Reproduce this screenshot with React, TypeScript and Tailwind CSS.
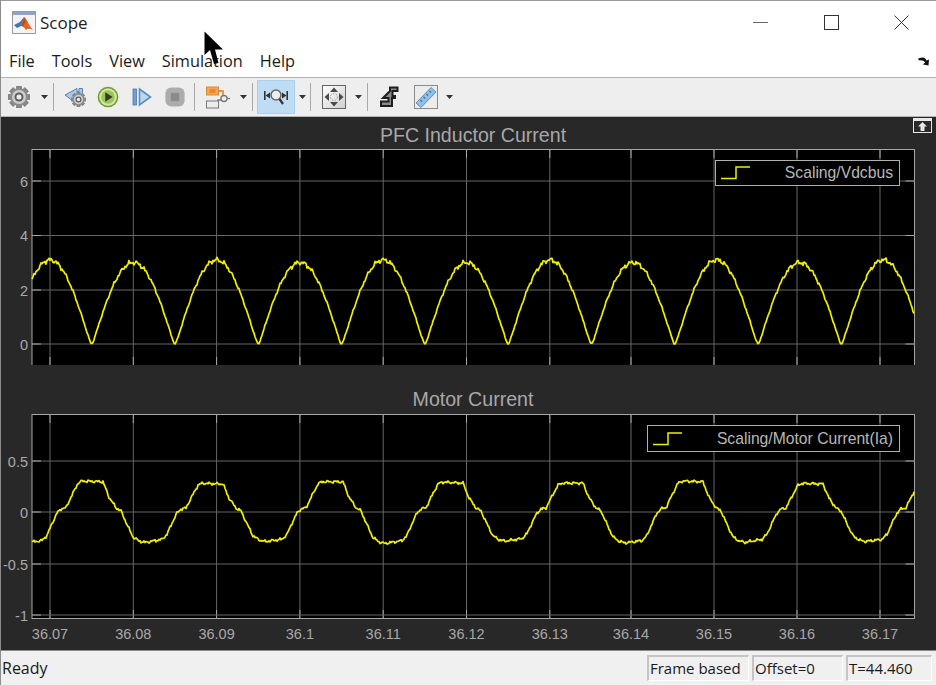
import React from 'react';

const xTicks = [
  { x: 50, label: '36.07' },
  { x: 133.3, label: '36.08' },
  { x: 216.6, label: '36.09' },
  { x: 299.9, label: '36.1' },
  { x: 383.2, label: '36.11' },
  { x: 466.5, label: '36.12' },
  { x: 549.8, label: '36.13' },
  { x: 631, label: '36.14' },
  { x: 714, label: '36.15' },
  { x: 797, label: '36.16' },
  { x: 880, label: '36.17' },
];

const X0 = 32;
const X1 = 914.5;

// cheap repeatable noise so both traces look like sampled signals
const wobble = (x: number) =>
  Math.sin(x * 0.79) * 0.45 + Math.sin(x * 1.71 + 1.2) * 0.35 + Math.sin(x * 3.37 + 0.4) * 0.3;

const inductorPath = () => {
  const pts: string[] = [];
  for (let x = X0; x <= X1; x += 1) {
    const c = Math.abs(Math.cos((Math.PI * (x - 50)) / 83.3));
    // rounded foot where the rectified wave touches zero
    const base = Math.sqrt(c * c + 0.002) - 0.044;
    const amp = 3.18 + Math.sin(x * 0.037) * 0.05;
    const v = amp * base + wobble(x) * (0.03 + 0.08 * c * c);
    pts.push(`${x.toFixed(2)},${(195 - Math.max(v, 0) * 27.2).toFixed(2)}`);
  }
  return 'M' + pts.join(' L');
};

const motorShape = [
  [0, -0.01], [4, 0.03], [9, 0.04], [14, 0.14], [21, 0.27], [25, 0.29], [46, 0.285],
  [52, 0.14], [59, 0.04], [64, 0.01], [70, -0.12], [76, -0.24], [82, -0.28], [88, -0.295],
  [105, -0.27], [110, -0.22], [115, -0.11], [120, -0.01],
];

const motorAt = (t: number) => {
  for (let i = 1; i < motorShape.length; i++) {
    if (t <= motorShape[i][0]) {
      const [a, b] = motorShape[i - 1];
      const [c, d] = motorShape[i];
      return b + ((t - a) / (c - a)) * (d - b);
    }
  }
  return 0;
};

const motorPath = () => {
  const pts: string[] = [];
  for (let x = X0; x <= X1; x += 1) {
    const t = (((x - 57) % 120) + 120) % 120;
    const v = motorAt(t) * (1 + Math.sin(x * 0.021) * 0.04) + wobble(x) * 0.016;
    pts.push(`${x.toFixed(2)},${(98 - v * 102.6).toFixed(2)}`);
  }
  return 'M' + pts.join(' L');
};

const labelFont = { fontFamily: '"Liberation Sans", Arial, sans-serif' };

const Axes = ({
  height,
  boxH,
  yTicks,
  trace,
  showX,
}: {
  height: number;
  boxH: number;
  yTicks: { y: number; label: string }[];
  trace: string;
  showX?: boolean;
}) => (
  <svg width={936} height={height} className="block" style={labelFont}>
    <rect x={X0} y={0.5} width={X1 - X0} height={boxH} fill="#000" stroke="#a6a6a6" />
    {xTicks.map((t) => (
      <g key={t.x}>
        <line x1={t.x} x2={t.x} y1={1} y2={boxH} stroke="#666" />
        <line x1={t.x} x2={t.x} y1={1} y2={9} stroke="#a6a6a6" />
        <line x1={t.x} x2={t.x} y1={boxH - 8} y2={boxH} stroke="#a6a6a6" />
        {showX && (
          <text x={t.x} y={boxH + 20.5} fontSize={14.5} fill="#a8a8a8" textAnchor="middle">
            {t.label}
          </text>
        )}
      </g>
    ))}
    {yTicks.map((t) => (
      <g key={t.label}>
        <line x1={X0} x2={X1} y1={t.y} y2={t.y} stroke="#666" />
        <line x1={X0} x2={X0 + 9} y1={t.y} y2={t.y} stroke="#a6a6a6" />
        <line x1={X1 - 9} x2={X1} y1={t.y} y2={t.y} stroke="#a6a6a6" />
        <text x={28} y={t.y + 5.5} fontSize={14.5} fill="#a8a8a8" textAnchor="end">
          {t.label}
        </text>
      </g>
    ))}
    <path d={trace} fill="none" stroke="#f0f000" strokeWidth={1.7} strokeLinejoin="round" />
  </svg>
);

const Legend = ({ label, className }: { label: string; className: string }) => (
  <div
    className={`absolute flex items-center justify-between border border-[#b0b0b0] bg-black pl-[5px] pr-[6px] text-[15.7px] text-[#b8b8b8] ${className}`}
    style={labelFont}
  >
    <svg width={30} height={14} className="block">
      <path d="M0 12.5H15V1H29" fill="none" stroke="#f0f000" strokeWidth={1.5} />
    </svg>
    <span>{label}</span>
  </div>
);

const Caret = () => (
  <svg width={7} height={4} className="block overflow-visible">
    <path d="M0 0H7L3.5 4Z" fill="#333" />
  </svg>
);

const Sep = ({ className = '' }: { className?: string }) => (
  <div className={`h-[28px] w-[2px] shrink-0 border-l border-[#a8a8a8] ${className}`} />
);

const Slot = ({ className, children }: { className: string; children: React.ReactNode }) => (
  <div className={`flex h-full shrink-0 items-center justify-center ${className}`}>{children}</div>
);

const teeth = [0, 45, 90, 135, 180, 225, 270, 315];

const SmallGear = ({ cx, cy, r }: { cx: number; cy: number; r: number }) => (
  <g>
    {teeth.map((a) => (
      <rect
        key={a}
        x={cx - r * 0.3}
        y={cy - r * 1.22}
        width={r * 0.6}
        height={r * 2.44}
        fill="#858585"
        transform={`rotate(${a} ${cx} ${cy})`}
      />
    ))}
    <circle cx={cx} cy={cy} r={r} fill="#8c8c8c" />
    <circle cx={cx} cy={cy} r={r * 0.78} fill="#cdcdcd" />
    <circle cx={cx} cy={cy} r={r * 0.5} fill="#5e5e5e" />
    <circle cx={cx} cy={cy} r={r * 0.28} fill="#ececec" />
  </g>
);

const MatlabLogo = () => (
  <svg width={24} height={23} viewBox="0 0 24 23" className="block">
    <rect x={0.5} y={0.5} width={23} height={22} fill="#f4f4f4" stroke="#9a9a9a" />
    <rect x={1} y={1} width={22} height={3} fill="#8ea6c4" />
    <path d="M2 14L8 11L12 6L9 15L5 17Z" fill="#3a78b8" />
    <path d="M12 6C14 6 17 15 21 19C18 18 16 17 14 19C12 16 10 15 9 15Z" fill="#e0672a" />
    <path d="M12 6L14 11L11 15L9 15Z" fill="#c24a1c" />
  </svg>
);

const CornerArrow = () => (
  <svg width={12} height={9} viewBox="0 0 12 9" className="block">
    <path d="M0 1.5L4 0.5C7 0.5 8 2 8.5 3.5L11 2.5L10.5 8.5L5 7.5L7 5.5C6 4 4 3 1 3.5Z" fill="#111" />
  </svg>
);

const BackIcon = () => (
  <svg width={24} height={22} viewBox="0 0 24 22" className="block">
    <path d="M1 9L13 2.5V5.5H15V2.5H18.5V8L12 15L9 15Z" fill="#a9c8e8" stroke="#5a84ae" />
    <SmallGear cx={14.5} cy={13.5} r={6} />
  </svg>
);

const PlayIcon = () => (
  <svg width={24} height={24} viewBox="0 0 24 24" className="block">
    <circle cx={12} cy={12} r={11.3} fill="#6f9f2a" />
    <circle cx={12} cy={12} r={9.6} fill="#d3e6ae" />
    <circle cx={12} cy={12} r={7.4} fill="#9cc457" />
    <path d="M9 6.8L17 12L9 17.2Z" fill="#343c20" />
  </svg>
);

const StepIcon = () => (
  <svg width={20} height={22} viewBox="0 0 20 22" className="block">
    <rect x={1} y={3} width={3.5} height={16} fill="#6f9fcd" stroke="#4d7aa8" strokeWidth={0.8} />
    <path d="M7.5 3L18.5 11L7.5 19Z" fill="#bcd6ee" stroke="#5a8cbc" strokeWidth={1.6} />
  </svg>
);

const StopIcon = () => (
  <svg width={24} height={24} viewBox="0 0 24 24" className="block">
    <rect x={0.5} y={0.5} width={23} height={23} rx={7} fill="#acacac" />
    <rect x={7} y={7} width={10} height={10} fill="#8b8b8b" />
  </svg>
);

const BlocksIcon = () => (
  <svg width={26} height={26} viewBox="0 0 26 26" className="block">
    <path d="M14 7H18V12" fill="none" stroke="#c97c2a" strokeWidth={1.4} />
    <path d="M18 16H13V20" fill="none" stroke="#777" strokeWidth={1.4} />
    <rect x={1.5} y={3} width={12} height={8} fill="#f2a65a" stroke="#d98a30" />
    <rect x={4.5} y={5} width={6} height={4} fill="#e88b2a" />
    <rect x={1.5} y={17} width={12} height={7} fill="#ededed" stroke="#777" />
    <circle cx={19} cy={14.5} r={3} fill="#eee" stroke="#777" strokeWidth={1.3} />
    <path d="M22 14.5H25" stroke="#777" strokeWidth={1.3} />
  </svg>
);

const ZoomXIcon = () => (
  <svg width={24} height={18} viewBox="0 0 24 18" className="block">
    <path d="M0.8 3V12M23.2 3V12" stroke="#333" strokeWidth={1.6} />
    <path d="M1.5 7.5L6 4.5V10.5ZM22.5 7.5L18 4.5V10.5Z" fill="#333" />
    <circle cx={12} cy={7} r={5} fill="#e8eef2" stroke="#666" strokeWidth={1.5} />
    <path d="M15.5 11L19 16" stroke="#333" strokeWidth={2.2} />
  </svg>
);

const FitIcon = () => (
  <svg width={24} height={24} viewBox="0 0 24 24" className="block">
    <defs>
      <linearGradient id="fitbg" x1="0" y1="0" x2="1" y2="1">
        <stop offset="0" stopColor="#ffffff" />
        <stop offset="1" stopColor="#cfcfcf" />
      </linearGradient>
    </defs>
    <rect x={0.5} y={0.5} width={23} height={23} fill="url(#fitbg)" stroke="#666" />
    <path d="M12 2.5L16 7H8ZM12 21.5L16 17H8ZM2.5 12L7 8V16ZM21.5 12L17 8V16Z" fill="#4a4a4a" />
    <circle cx={12} cy={12} r={3.5} fill="none" stroke="#999" strokeDasharray="1.5 1.5" />
  </svg>
);

const SteppedIcon = () => (
  <svg width={20} height={24} viewBox="0 0 20 24" className="block">
    <path d="M2 22V16.5H9.5V13H4L11 6V2.5H18.5V6H13.5V11H16V13H13V21H2Z" fill="#8a8a8a" stroke="#1e1e1e" strokeWidth={2} />
  </svg>
);

const RulerIcon = () => (
  <svg width={24} height={24} viewBox="0 0 24 24" className="block">
    <rect x={0.5} y={0.5} width={23} height={23} fill="#ececec" stroke="#8a8a8a" />
    <path d="M2 18L17 2.5L22 7L7 22.5Z" fill="#8fc0ea" stroke="#5f8fb8" />
    <path d="M8 16.5L6.5 15M11 13.5L9.5 12M14 10.5L12.5 9M17 7.5L15.5 6" stroke="#44688a" strokeWidth={1.2} />
  </svg>
);

const RestoreIcon = () => (
  <svg width={19} height={15} viewBox="0 0 19 15" className="block">
    <rect x={0.5} y={0.5} width={18} height={14} fill="#2a2a2a" stroke="#e8e8e8" />
    <rect x={1} y={1} width={17} height={2} fill="#e8e8e8" />
    <path d="M9.5 4L14 8.5H11.5V13H7.5V8.5H5Z" fill="#e8e8e8" />
  </svg>
);

const StatusCell = ({ className, children }: { className: string; children: React.ReactNode }) => (
  <div
    className={`flex h-[26px] items-center border-t-2 border-l-2 border-r border-b border-t-[#c4c4c4] border-l-[#c4c4c4] border-r-white border-b-white pl-[1px] ${className}`}
  >
    {children}
  </div>
);

export default function App() {
  return (
    <div
      className="relative flex h-[685px] w-[936px] flex-col overflow-hidden border-l border-[#8c8c8c] bg-white text-[#1a1a1a]"
      style={{ fontFamily: '"Open Sans", "Noto Sans", sans-serif' }}
    >
      {/* title bar */}
      <div className="flex h-[44px] shrink-0 items-center border-t border-[#9a9a9a] pl-[11px]">
        <div className="-mt-[1px]">
          <MatlabLogo />
        </div>
        <span className="ml-[4px] text-[17px] text-[#222]">Scope</span>
        <div className="ml-auto flex h-full items-center">
          <div className="flex w-[71px] justify-center">
            <div className="h-[1.5px] w-[15px] bg-[#666]" />
          </div>
          <div className="flex w-[70px] justify-center">
            <div className="h-[15px] w-[15px] border border-[#333]" />
          </div>
          <div className="flex w-[70px] justify-center">
            <svg width={15} height={15} className="block">
              <path d="M0.5 0.5L14.5 14.5M14.5 0.5L0.5 14.5" stroke="#333" />
            </svg>
          </div>
        </div>
      </div>

      {/* menu bar */}
      <div className="flex h-[33px] shrink-0 items-center justify-between pl-[8px] pr-[6px] pt-[2px] text-[16.3px]">
        <div className="flex gap-[17px]">
          <span>File</span>
          <span>Tools</span>
          <span>View</span>
          <span>Simulation</span>
          <span>Help</span>
        </div>
        <CornerArrow />
      </div>

      {/* toolbar */}
      <div className="flex h-[40px] shrink-0 items-center border-y border-[#b4b4b4] bg-[#eeeeee] pl-[2px]">
        <Slot className="w-[32px]">
          <svg width={24} height={24} viewBox="0 0 24 24" className="block">
            <SmallGear cx={12} cy={12} r={9} />
          </svg>
        </Slot>
        <Slot className="w-[18px]"><Caret /></Slot>
        <Sep />
        <Slot className="w-[42px]"><BackIcon /></Slot>
        <Slot className="w-[22px]"><PlayIcon /></Slot>
        <Slot className="w-[46px]"><StepIcon /></Slot>
        <Slot className="w-[20px]"><StopIcon /></Slot>
        <Sep className="ml-[9px]" />
        <Slot className="w-[44px]"><BlocksIcon /></Slot>
        <Slot className="w-[6px]"><Caret /></Slot>
        <Sep className="ml-[6px]" />
        <div className="ml-[3px] flex h-[34px] w-[38px] shrink-0 items-center justify-center border border-[#a8d0f0] bg-[#bfdcf5]">
          <ZoomXIcon />
        </div>
        <Slot className="w-[14px]"><Caret /></Slot>
        <Sep className="ml-[1px]" />
        <Slot className="w-[44px]"><FitIcon /></Slot>
        <Slot className="w-[4px]"><Caret /></Slot>
        <Sep className="ml-[7px]" />
        <Slot className="w-[40px]"><SteppedIcon /></Slot>
        <Slot className="w-[34px]"><RulerIcon /></Slot>
        <Slot className="w-[12px]"><Caret /></Slot>
      </div>

      {/* scope panels */}
      <div className="relative -ml-[1px] h-[533px] shrink-0 bg-[#282828]">
        <div className="absolute right-[4px] top-[1px]">
          <RestoreIcon />
        </div>
        <div
          className="flex h-[32px] items-center justify-center pl-[10px] pt-[5px] text-[19.6px] text-[#a8a8a8]"
          style={labelFont}
        >
          PFC Inductor Current
        </div>
        <div className="relative">
          <Axes
            height={216}
            boxH={216}
            trace={inductorPath()}
            yTicks={[
              { y: 32, label: '6' },
              { y: 86.5, label: '4' },
              { y: 141, label: '2' },
              { y: 195, label: '0' },
            ]}
          />
          <Legend label="Scaling/Vdcbus" className="left-[715px] top-[11px] h-[26px] w-[185px]" />
        </div>
        <div
          className="flex h-[49px] items-end justify-center pl-[10px] text-[19.6px] text-[#a8a8a8]"
          style={labelFont}
        >
          Motor Current
        </div>
        <div className="relative">
          <Axes
            height={236}
            boxH={204}
            trace={motorPath()}
            showX
            yTicks={[
              { y: 47, label: '0.5' },
              { y: 98, label: '0' },
              { y: 150, label: '-0.5' },
              { y: 201, label: '-1' },
            ]}
          />
          <Legend label="Scaling/Motor Current(Ia)" className="left-[647px] top-[11px] h-[27px] w-[253px]" />
        </div>
      </div>

      {/* status bar */}
      <div className="flex h-[35px] shrink-0 items-center border-t border-[#8a8a8a] bg-[#f0f0f0] pl-[1px] text-[15px]">
        <span className="text-[16px]">Ready</span>
        <div className="ml-auto flex items-center gap-[3px] pr-[4px]">
          <StatusCell className="w-[102px]">Frame based</StatusCell>
          <StatusCell className="w-[91px]">Offset=0</StatusCell>
          <StatusCell className="w-[86px]">T=44.460</StatusCell>
        </div>
      </div>

      {/* mouse pointer in the capture */}
      <svg width={24} height={38} viewBox="0 0 24 38" className="absolute left-[202px] top-[30px] block">
        <path d="M1.5 1.5V25L7 20L11 34L15.5 33L12 19.5L20 19.5Z" fill="#000" />
      </svg>
    </div>
  );
}
